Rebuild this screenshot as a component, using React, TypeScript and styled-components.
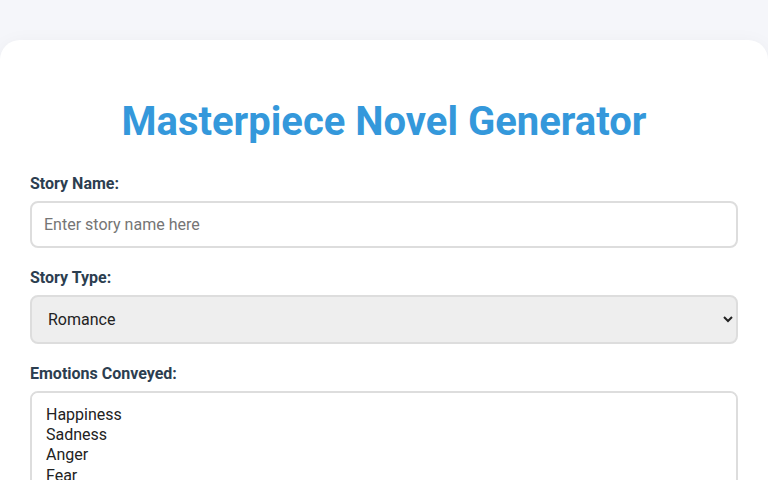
import React from 'react'
import styled, { createGlobalStyle } from 'styled-components'

const GlobalStyle = createGlobalStyle`
  body {
    margin: 0;
    background: #f5f6fa;
    font-family: Roboto, "Liberation Sans", sans-serif;
    color: #2c3e50;
  }
`

const Container = styled.div`
  max-width: 800px;
  margin: 40px auto 0;
  padding: 30px;
  background: #ffffff;
  border-radius: 20px;
  box-shadow: 0 4px 20px rgba(0, 0, 0, 0.05);
  box-sizing: border-box;
`

const Title = styled.h1`
  text-align: center;
  color: #3498db;
  font-size: 40px;
  font-weight: 700;
  margin: 28px 0 29px;
`

const FormGroup = styled.div`
  margin-bottom: 20px;
`

const Label = styled.label`
  display: block;
  font-weight: 700;
  font-size: 16px;
  margin-bottom: 8px;
  color: #2c3e50;
`

const fieldStyles = `
  width: 100%;
  box-sizing: border-box;
  padding: 12px;
  border: 2px solid #ddd;
  border-radius: 8px;
  font-size: 16px;
  font-family: Roboto, "Liberation Sans", sans-serif;
  color: #222;
  outline: none;
`

const TextInput = styled.input`
  ${fieldStyles}
  &::placeholder {
    color: #757575;
  }
`

const Select = styled.select`
  ${fieldStyles}
  background: #eeeeee;
`

const MultiSelect = styled.select`
  ${fieldStyles}
  background: #ffffff;
  height: 160px;
`

const emotions = ['Happiness', 'Sadness', 'Anger', 'Fear', 'Surprise', 'Disgust', 'Love']

export default function App() {
  return (
    <>
      <GlobalStyle />
      <Container>
        <Title>Masterpiece Novel Generator</Title>
        <FormGroup>
          <Label htmlFor="story-name">Story Name:</Label>
          <TextInput id="story-name" type="text" placeholder="Enter story name here" />
        </FormGroup>
        <FormGroup>
          <Label htmlFor="story-type">Story Type:</Label>
          <Select id="story-type" defaultValue="Romance">
            <option>Romance</option>
            <option>Mystery</option>
            <option>Fantasy</option>
            <option>Science Fiction</option>
            <option>Horror</option>
          </Select>
        </FormGroup>
        <FormGroup>
          <Label htmlFor="emotions">Emotions Conveyed:</Label>
          <MultiSelect id="emotions" multiple>
            {emotions.map(e => (
              <option key={e}>{e}</option>
            ))}
          </MultiSelect>
        </FormGroup>
      </Container>
    </>
  )
}
